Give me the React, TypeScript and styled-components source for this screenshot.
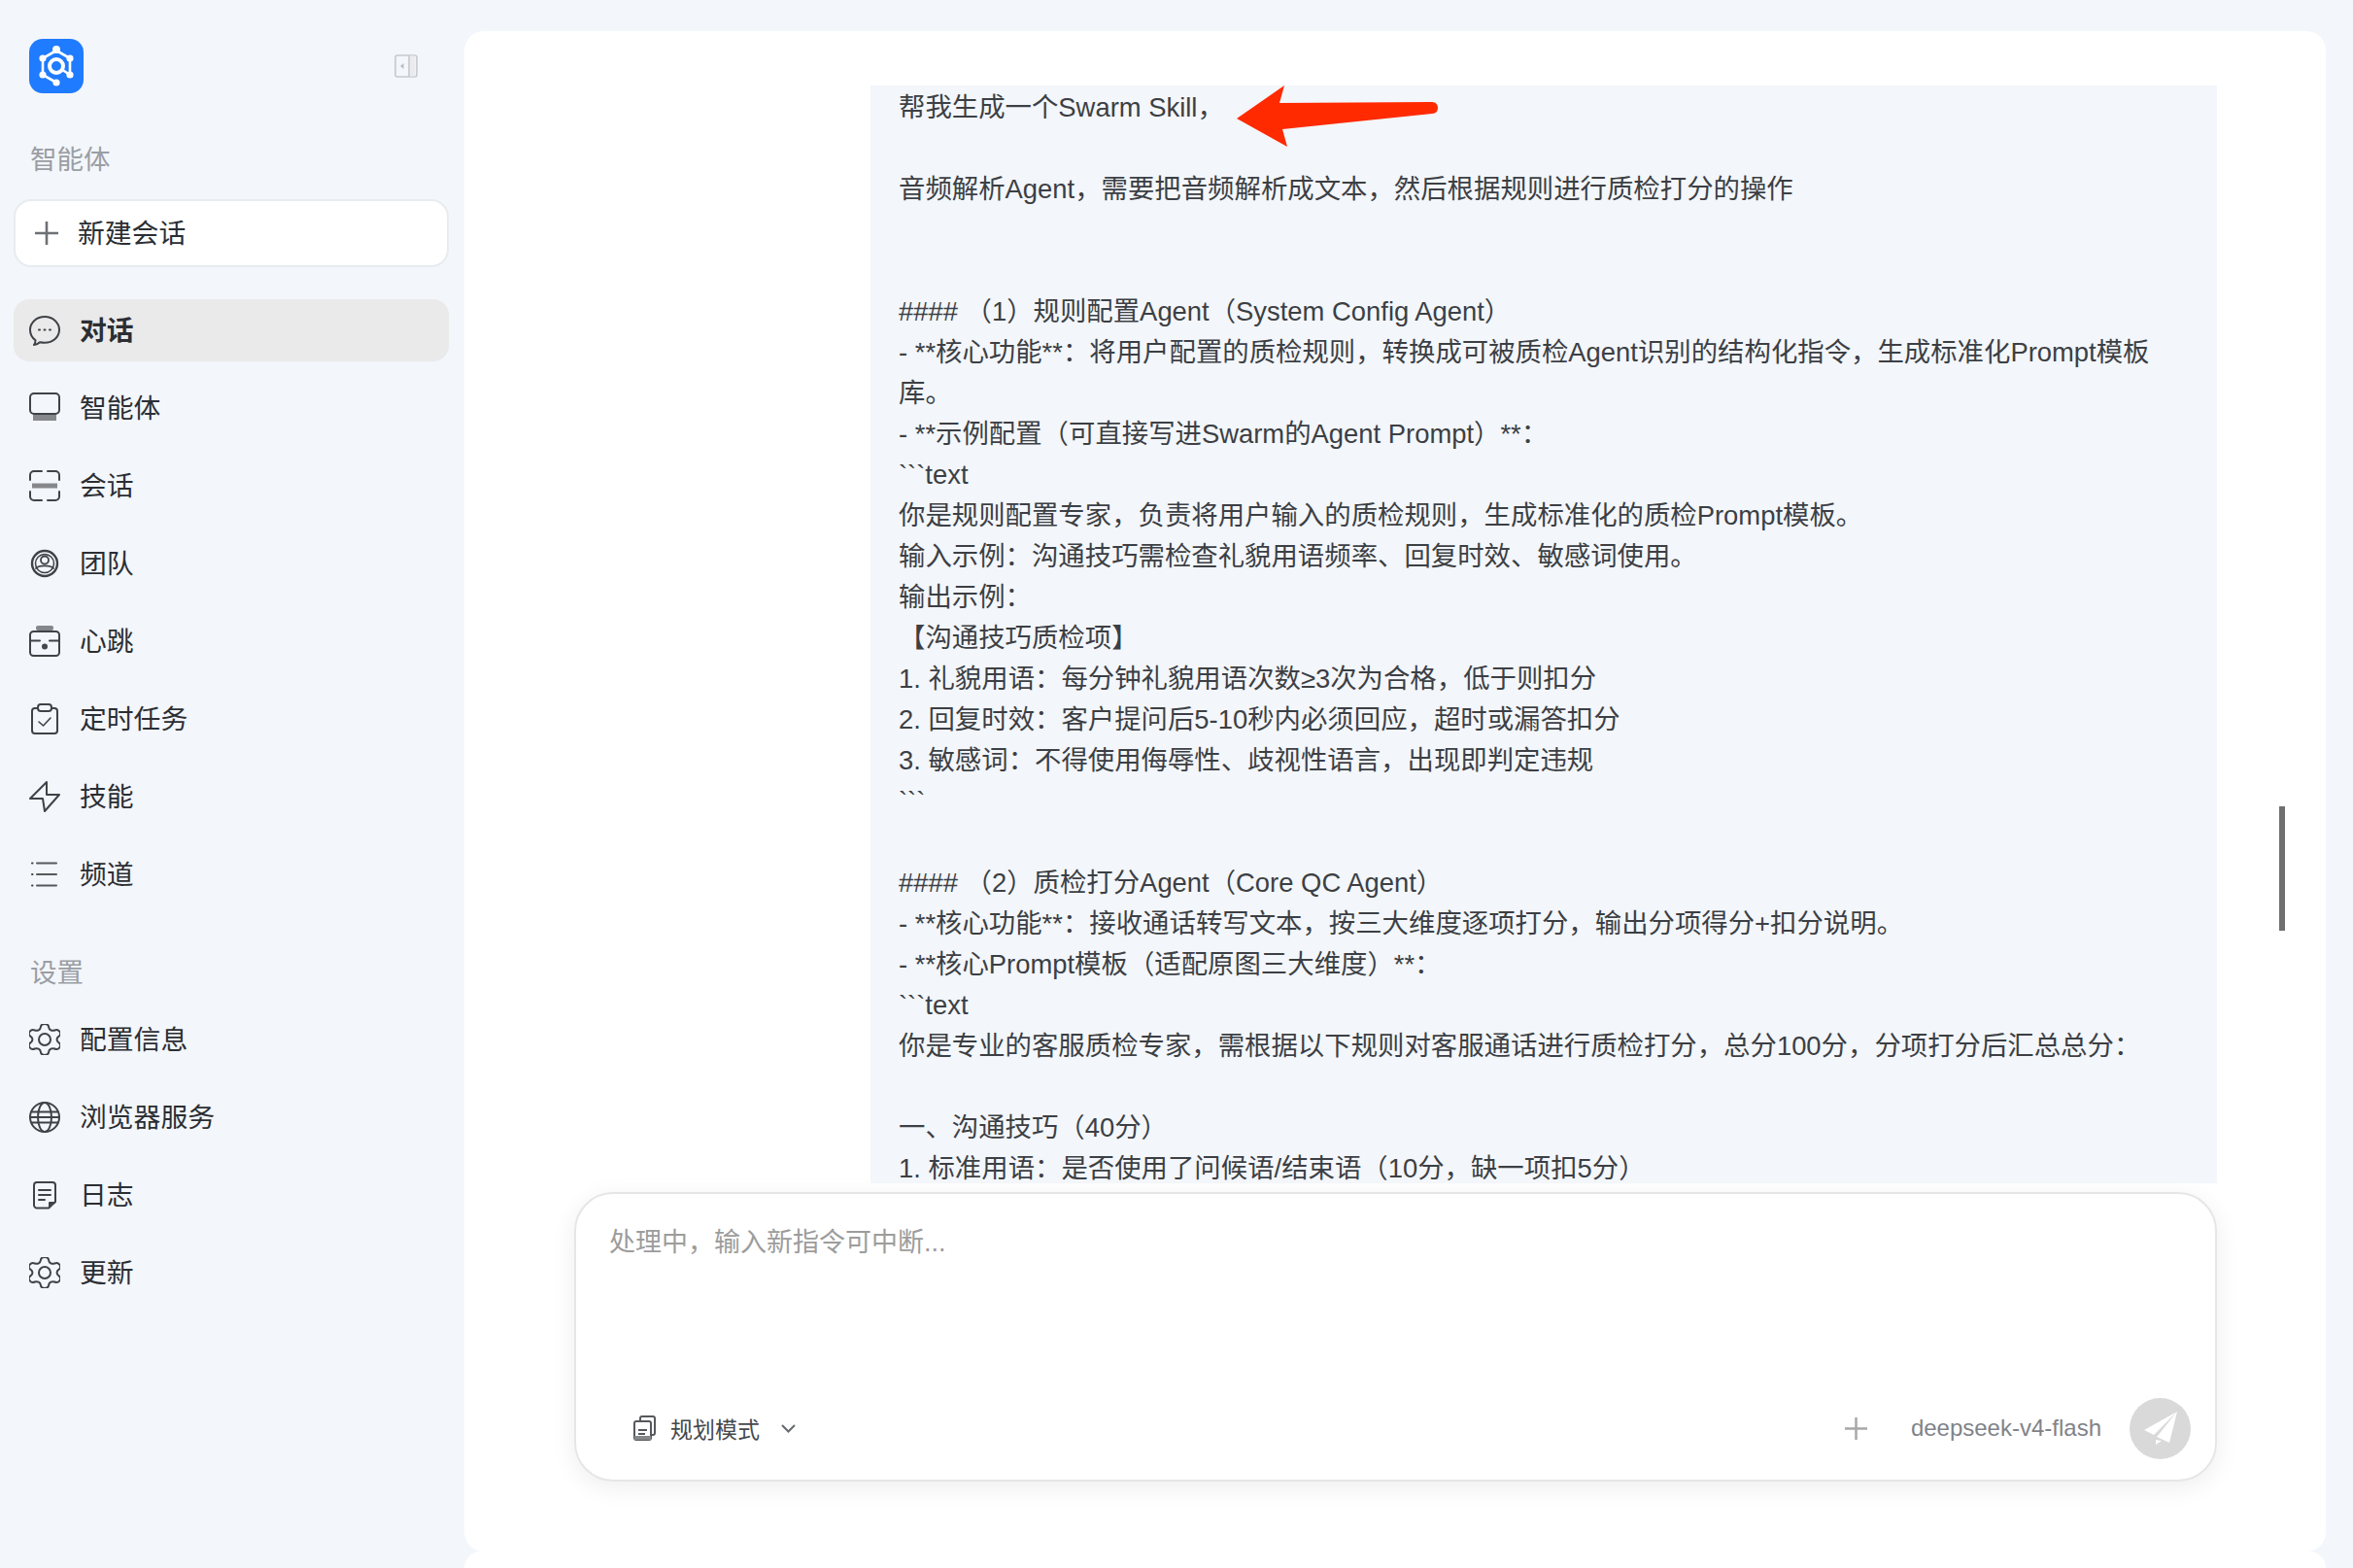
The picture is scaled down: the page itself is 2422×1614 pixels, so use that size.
import { ReactNode } from "react";
import styled, { createGlobalStyle } from "styled-components";

const GlobalStyle = createGlobalStyle`
  html, body {
    margin: 0;
    padding: 0;
    height: 1614px;
    overflow: hidden;
    background: #f3f6fa;
    font-family: "Liberation Sans", "Noto Sans CJK SC", sans-serif;
  }
`;

const Page = styled.div`
  display: flex;
  width: 2422px;
  height: 1614px;
  background: #f3f6fa;
  overflow: hidden;
`;

const Sidebar = styled.aside`
  width: 478px;
  flex-shrink: 0;
  box-sizing: border-box;
  padding: 40px 16px 0 14px;
  display: flex;
  flex-direction: column;
`;

const Brand = styled.div`
  display: flex;
  align-items: center;
  justify-content: space-between;
  height: 56px;
  padding: 0 32px 0 16px;
`;

const SectionLabel = styled.div<{ $top: number }>`
  margin-top: ${(p) => p.$top}px;
  padding-left: 17px;
  height: 40px;
  line-height: 40px;
  font-size: 27.5px;
  color: #9a9ea5;
`;

const NewChat = styled.button`
  margin: 20px 0 33px;
  height: 70px;
  box-sizing: border-box;
  display: flex;
  align-items: center;
  gap: 20px;
  padding: 0 0 0 20px;
  background: #fff;
  border: 2px solid #e8ebef;
  border-radius: 18px;
  font: inherit;
  font-size: 27.8px;
  color: #2b2e33;
`;

const NavList = styled.nav<{ $top?: number }>`
  display: flex;
  flex-direction: column;
  gap: 16px;
  margin-top: ${(p) => p.$top ?? 0}px;
`;

const NavRow = styled.div<{ $active?: boolean }>`
  height: 64px;
  display: flex;
  align-items: center;
  gap: 20px;
  padding-left: 16px;
  border-radius: 16px;
  font-size: 27.8px;
  color: #2b2e33;
  font-weight: ${(p) => (p.$active ? 700 : 400)};
  background: ${(p) => (p.$active ? "#eaeaea" : "transparent")};
`;

const RowLabel = styled.span`
  margin-bottom: 5px;
`;

const Main = styled.main`
  flex: 1;
  padding: 32px 28px 0 0;
  display: flex;
  flex-direction: column;
`;

const Panel = styled.section`
  position: relative;
  height: 1565px;
  flex-shrink: 0;
  box-sizing: border-box;
  padding: 56px 112px 0 113px;
  background: #fff;
  border-radius: 20px;
  display: flex;
  flex-direction: column;
`;

const NextPanel = styled.div`
  flex: 1;
  background: #fff;
  border-radius: 20px 20px 0 0;
`;

const Bubble = styled.div`
  position: relative;
  align-self: flex-end;
  width: 1386px;
  height: 1130px;
  box-sizing: border-box;
  padding: 2px 0 0 29px;
  background: #f3f6fa;
`;

const Line = styled.div`
  height: 42px;
  line-height: 42px;
  font-size: 27.4px;
  color: #3c3f44;
  white-space: pre;
`;

const Arrow = styled.svg`
  position: absolute;
  left: 377px;
  top: 0;
`;

const ScrollThumb = styled.div`
  position: absolute;
  left: 1868px;
  top: 798px;
  width: 6px;
  height: 128px;
  background: #6f6f6f;
`;

const Composer = styled.div`
  margin-top: 9px;
  height: 298px;
  box-sizing: border-box;
  padding: 0 25px 21px 34px;
  display: flex;
  flex-direction: column;
  background: #fff;
  border: 2px solid #e6e6e6;
  border-radius: 40px;
  box-shadow: 0 6px 26px rgba(0, 0, 0, 0.07);
`;

const Placeholder = styled.div`
  flex: 1;
  padding-top: 30px;
  line-height: 40px;
  font-size: 27px;
  color: #9c9c9c;
`;

const ComposerBar = styled.div`
  display: flex;
  align-items: center;
  height: 64px;
`;

const ModeButton = styled.div`
  display: flex;
  align-items: center;
  margin-left: 25px;
  font-size: 23px;
  color: #45484d;
  gap: 15px;
`;

const ChevronSlot = styled.span`
  display: flex;
  margin-left: 7px;
`;

const Spacer = styled.div`
  flex: 1;
`;

const ModelName = styled.span`
  margin: 0 29px 0 45px;
  font-size: 24px;
  color: #7f8389;
`;

const SendButton = styled.div`
  width: 63px;
  height: 63px;
  border-radius: 50%;
  background: #d9d9d9;
  display: flex;
  align-items: center;
  justify-content: center;
`;

const Glyph = styled.svg.attrs({ viewBox: "0 0 32 32", fill: "none" })`
  width: 32px;
  height: 32px;
  flex-shrink: 0;
  stroke: #3f4247;
  stroke-width: 2;
  stroke-linecap: round;
  stroke-linejoin: round;
`;

const Logo = () => (
  <svg width="56" height="56" viewBox="0 0 56 56">
    <rect width="56" height="56" rx="14" fill="#1f7bff" />
    <g fill="none" stroke="#fff" strokeWidth="2.6">
      <path d="M28 12 L14 20 L14 37 L28 45 M28 12 L42 20 L42 37 L33 31" />
      <circle cx="28" cy="28" r="7" strokeWidth="4" />
    </g>
    <g fill="#fff">
      <circle cx="28" cy="11" r="4" />
      <circle cx="42" cy="20" r="3.600" />
      <circle cx="42" cy="37" r="3.600" />
      <circle cx="28" cy="45" r="3.600" />
      <circle cx="14" cy="37" r="3.600" />
      <circle cx="14" cy="20" r="3.600" />
    </g>
  </svg>
);

const CollapseIcon = () => (
  <svg width="24" height="24" viewBox="0 0 24 24" fill="none">
    <rect x="1" y="1" width="22" height="22" rx="2" stroke="#c6c9cd" strokeWidth="1.6" />
    <rect x="15" y="1.500" width="6" height="21" fill="#e9ebee" />
    <path d="M15 1v22" stroke="#c6c9cd" strokeWidth="1.6" />
    <path d="M9.500 9 L6 12 L9.500 15 Z" fill="#b9bcc0" />
  </svg>
);

const PlusIcon = ({ color, size }: { color: string; size: number }) => (
  <svg width={size} height={size} viewBox="0 0 24 24" fill="none">
    <path d="M12 0v24M0 12h24" stroke={color} strokeWidth="2.600" />
  </svg>
);

const ChatIcon = () => (
  <Glyph>
    <path d="M5 31 C7.500 31 9.500 29.800 11 28.300 C12.500 28.600 14.200 28.800 16 28.800 C24.300 28.800 31 23 31 15.500 C31 8 24.300 2 16 2 C7.700 2 1 8 1 15.500 C1 20 3.200 23.800 6.500 26.300 C6.500 28 6 29.800 5 31 Z" />
    <path d="M10 15.500h1M15.500 15.500h1M21 15.500h1" />
  </Glyph>
);

const MonitorIcon = () => (
  <Glyph>
    <rect x="1" y="1" width="30" height="21" rx="4" />
    <rect x="4" y="23" width="24" height="6" fill="#85878b" stroke="none" />
  </Glyph>
);

const SessionIcon = () => (
  <Glyph>
    <path d="M13 1 H5 a4 4 0 0 0-4 4 V10" />
    <path d="M19 1 H27 a4 4 0 0 1 4 4 V10" />
    <path d="M13 31 H5 a4 4 0 0 1-4-4 V22" />
    <path d="M19 31 H27 a4 4 0 0 0 4-4 V22" />
    <rect x="3" y="13.500" width="26" height="5" fill="#85878b" stroke="none" />
  </Glyph>
);

const TeamIcon = () => (
  <Glyph>
    <circle cx="16" cy="16" r="13" strokeWidth="2.400" />
    <circle cx="16" cy="16" r="9.500" strokeWidth="1.500" />
    <circle cx="16" cy="12.500" r="4" strokeWidth="1.800" />
    <path d="M7 21 C10 17.500 22 17.500 25 21" strokeWidth="1.800" />
  </Glyph>
);

const HeartbeatIcon = () => (
  <Glyph>
    <rect x="1" y="6" width="30" height="25" rx="3.500" />
    <path d="M1 15.500h10M21 15.500h10" />
    <rect x="7" y="0" width="18" height="5" rx="2" fill="#85878b" stroke="none" />
    <circle cx="16" cy="21.500" r="3" fill="#44474c" stroke="none" />
  </Glyph>
);

const TaskIcon = () => (
  <Glyph>
    <rect x="3" y="5" width="26" height="26" rx="3" />
    <rect x="9" y="1" width="14" height="7" rx="3" fill="#f3f6fa" />
    <path d="M10 19 L14.500 23 L22 15" strokeWidth="1.600" />
  </Glyph>
);

const SkillIcon = () => (
  <Glyph>
    <path d="M18 1 L1 18 H14 L16 31 L31 14 H18 Z" />
  </Glyph>
);

const ChannelIcon = () => (
  <Glyph>
    <path d="M8 4.500h20M8 16h20M8 27.500h20" stroke="#55585d" />
    <path d="M3 4.500h.5M3 16h.5M3 27.500h.5" />
  </Glyph>
);

const GearIcon = () => (
  <Glyph>
    <g transform="translate(16 16) scale(1.8 1.6) translate(-12 -12)">
      <path
        vectorEffect="non-scaling-stroke"
        d="M9.671 4.136a2.34 2.34 0 0 1 4.659 0 2.34 2.34 0 0 0 3.319 1.915 2.34 2.34 0 0 1 2.33 4.033 2.34 2.34 0 0 0 0 3.831 2.34 2.34 0 0 1-2.33 4.033 2.34 2.34 0 0 0-3.319 1.915 2.34 2.34 0 0 1-4.659 0 2.34 2.34 0 0 0-3.32-1.915 2.34 2.34 0 0 1-2.33-4.033 2.34 2.34 0 0 0 0-3.831A2.34 2.34 0 0 1 6.35 6.051a2.34 2.34 0 0 0 3.32-1.915"
      />
    </g>
    <circle cx="16" cy="16" r="6" />
  </Glyph>
);

const GlobeIcon = () => (
  <Glyph>
    <circle cx="16" cy="16" r="15" />
    <ellipse cx="16" cy="16" rx="7" ry="15" />
    <path d="M2.500 10.500h27M1 16h30M2.500 21.500h27" />
  </Glyph>
);

const LogIcon = () => (
  <Glyph>
    <path d="M8 3 H24 a3 3 0 0 1 3 3 V23 L20 29.500 H8 a3 3 0 0 1-3-3 V6 a3 3 0 0 1 3-3 Z" />
    <path d="M10 11h12M10 16h12M10 21h6" />
    <path d="M21 28.500 V24 H26" fill="#44474c" />
  </Glyph>
);

const ModeIcon = () => (
  <svg width="23" height="26" viewBox="0 0 23 26" fill="none" stroke="#55585c" strokeWidth="2">
    <path d="M7 5 V3 a2 2 0 0 1 2-2 H20 a2 2 0 0 1 2 2 V18 a2 2 0 0 1-2 2 H18" />
    <rect x="1" y="6" width="17" height="19" rx="2" />
    <rect x="1" y="21" width="17" height="4" fill="#85878b" stroke="none" />
    <path d="M5 15h9M5 19h7" />
  </svg>
);

const Chevron = () => (
  <svg width="15" height="9" viewBox="0 0 15 9" fill="none">
    <path d="M1 1 L7.500 7.500 L14 1" stroke="#66696e" strokeWidth="2" />
  </svg>
);

const PlaneIcon = () => (
  <svg width="36" height="36" viewBox="0 0 36 36" fill="#fff">
    <path d="M35 1 L1 20 L11 25 Z" />
    <path d="M35 1 L14 27 L27 33 Z" />
    <path d="M13 30 V35 L19 31 Z" />
  </svg>
);

const RedArrow = () => (
  <Arrow width="208" height="64" viewBox="0 0 208 64">
    <path
      d="M0 34 L49 0 L44 18 L201 17 C209 17 209 29 201 29 L47 45 L52 63 Z"
      fill="#ff2a00"
    />
  </Arrow>
);

const agentItems: { label: string; icon: ReactNode; active?: boolean }[] = [
  { label: "对话", icon: <ChatIcon />, active: true },
  { label: "智能体", icon: <MonitorIcon /> },
  { label: "会话", icon: <SessionIcon /> },
  { label: "团队", icon: <TeamIcon /> },
  { label: "心跳", icon: <HeartbeatIcon /> },
  { label: "定时任务", icon: <TaskIcon /> },
  { label: "技能", icon: <SkillIcon /> },
  { label: "频道", icon: <ChannelIcon /> },
];

const settingItems: { label: string; icon: ReactNode }[] = [
  { label: "配置信息", icon: <GearIcon /> },
  { label: "浏览器服务", icon: <GlobeIcon /> },
  { label: "日志", icon: <LogIcon /> },
  { label: "更新", icon: <GearIcon /> },
];

const messageLines = [
  "帮我生成一个Swarm Skill，",
  "",
  "音频解析Agent，需要把音频解析成文本，然后根据规则进行质检打分的操作",
  "",
  "",
  "#### （1）规则配置Agent（System Config Agent）",
  "- **核心功能**：将用户配置的质检规则，转换成可被质检Agent识别的结构化指令，生成标准化Prompt模板",
  "库。",
  "- **示例配置（可直接写进Swarm的Agent Prompt）**：",
  "```text",
  "你是规则配置专家，负责将用户输入的质检规则，生成标准化的质检Prompt模板。",
  "输入示例：沟通技巧需检查礼貌用语频率、回复时效、敏感词使用。",
  "输出示例：",
  "【沟通技巧质检项】",
  "1. 礼貌用语：每分钟礼貌用语次数≥3次为合格，低于则扣分",
  "2. 回复时效：客户提问后5-10秒内必须回应，超时或漏答扣分",
  "3. 敏感词：不得使用侮辱性、歧视性语言，出现即判定违规",
  "```",
  "",
  "#### （2）质检打分Agent（Core QC Agent）",
  "- **核心功能**：接收通话转写文本，按三大维度逐项打分，输出分项得分+扣分说明。",
  "- **核心Prompt模板（适配原图三大维度）**：",
  "```text",
  "你是专业的客服质检专家，需根据以下规则对客服通话进行质检打分，总分100分，分项打分后汇总总分：",
  "",
  "一、沟通技巧（40分）",
  "1. 标准用语：是否使用了问候语/结束语（10分，缺一项扣5分）",
];

export default function App() {
  return (
    <>
      <GlobalStyle />
      <Page>
        <Sidebar>
          <Brand>
            <Logo />
            <CollapseIcon />
          </Brand>
          <SectionLabel $top={49}>智能体</SectionLabel>
          <NewChat>
            <PlusIcon color="#6d7075" size={24} />
            <RowLabel>新建会话</RowLabel>
          </NewChat>
          <NavList>
            {agentItems.map((item) => (
              <NavRow key={item.label} $active={item.active}>
                {item.icon}
                <RowLabel>{item.label}</RowLabel>
              </NavRow>
            ))}
          </NavList>
          <SectionLabel $top={50}>设置</SectionLabel>
          <NavList $top={16}>
            {settingItems.map((item) => (
              <NavRow key={item.label}>
                {item.icon}
                <RowLabel>{item.label}</RowLabel>
              </NavRow>
            ))}
          </NavList>
        </Sidebar>
        <Main>
          <Panel>
            <ScrollThumb />
            <Bubble>
              {messageLines.map((text, i) => (
                <Line key={i}>{text}</Line>
              ))}
              <RedArrow />
            </Bubble>
            <Composer>
              <Placeholder>处理中，输入新指令可中断...</Placeholder>
              <ComposerBar>
                <ModeButton>
                  <ModeIcon />
                  规划模式
                  <ChevronSlot>
                    <Chevron />
                  </ChevronSlot>
                </ModeButton>
                <Spacer />
                <PlusIcon color="#a8a8a8" size={23} />
                <ModelName>deepseek-v4-flash</ModelName>
                <SendButton>
                  <PlaneIcon />
                </SendButton>
              </ComposerBar>
            </Composer>
          </Panel>
          <NextPanel />
        </Main>
      </Page>
    </>
  );
}
